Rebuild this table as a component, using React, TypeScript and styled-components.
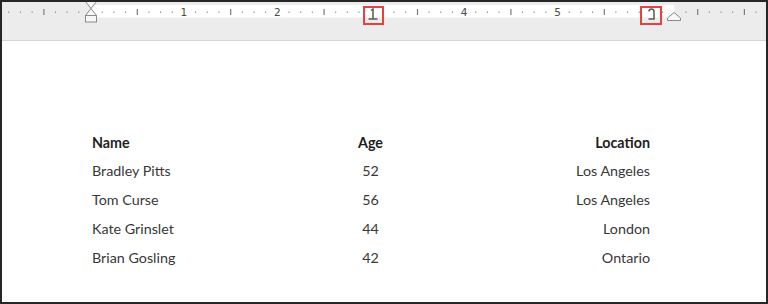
import styled, { createGlobalStyle } from 'styled-components';

const GlobalStyle = createGlobalStyle`
  html, body {
    margin: 0;
    padding: 0;
    background: #fff;
  }
  body {
    font-family: Lato, "Liberation Sans", sans-serif;
  }
`;

// ruler geometry, page coordinates
const ZERO = 90.5;
const INCH = 93.4;
const EIGHTH = INCH / 8;
const MARGIN_RIGHT = ZERO + INCH * 6.25;

const Frame = styled.div`
  width: 768px;
  height: 304px;
  box-sizing: border-box;
  border: 2px solid #262626;
  display: flex;
  flex-direction: column;
  overflow: hidden;
`;

const RulerBar = styled.div`
  position: relative;
  flex: 0 0 auto;
  height: 38px;
  background: #ececec;
  border-bottom: 1px solid #d6d6d6;
`;

const Scale = styled.svg`
  display: block;
`;

const Marker = styled.svg<{ $left: number; $top: number }>`
  position: absolute;
  left: ${({ $left }) => $left}px;
  top: ${({ $top }) => $top}px;
  overflow: visible;
`;

const Highlight = styled.div<{ $left: number; $top: number; $w: number; $h: number }>`
  position: absolute;
  left: ${({ $left }) => $left}px;
  top: ${({ $top }) => $top}px;
  width: ${({ $w }) => $w}px;
  height: ${({ $h }) => $h}px;
  box-sizing: border-box;
  border: 2px solid #e8403d;
`;

const Page = styled.div`
  flex: 1;
  background: #fff;
  padding: 87.5px 0 0 90px;
`;

const Table = styled.div`
  width: 558px;
  display: grid;
  grid-template-columns: 238px 81px 1fr;
  font-size: 14.3px;
  line-height: 28.75px;
  color: #333;
`;

const Cell = styled.div<{ $align?: 'left' | 'center' | 'right'; $head?: boolean }>`
  text-align: ${({ $align }) => $align ?? 'left'};
  font-weight: ${({ $head }) => ($head ? 700 : 400)};
  color: ${({ $head }) => ($head ? '#1e1e1e' : '#383838')};
  white-space: nowrap;
`;

type Row = { name: string; age: number; location: string };

const rows: Row[] = [
  { name: 'Bradley Pitts', age: 52, location: 'Los Angeles' },
  { name: 'Tom Curse', age: 56, location: 'Los Angeles' },
  { name: 'Kate Grinslet', age: 44, location: 'London' },
  { name: 'Brian Gosling', age: 42, location: 'Ontario' },
];

function RulerScale() {
  const marks = [];
  for (let k = -7; k <= 57; k += 1) {
    const x = ZERO + k * EIGHTH;
    if (k === 0 || k === 24 || k === 48 || k === 50) continue;
    if (k % 8 === 0 && k !== 56) {
      marks.push(
        <text
          key={k}
          x={x}
          y={15.8}
          textAnchor="middle"
          fontSize={10.5}
          fill="#4a4a4a"
          fontFamily='"DejaVu Sans", sans-serif'
        >
          {k / 8}
        </text>,
      );
    } else if (Math.abs(k) % 8 === 4 || k === 56) {
      marks.push(<rect key={k} x={x - 0.5} y={9} width={1.2} height={6} fill="#7d7d7d" />);
    } else {
      marks.push(<rect key={k} x={x - 0.5} y={11.5} width={1} height={1.5} fill="#8f8f8f" />);
    }
  }

  return (
    <Scale width={764} height={38} viewBox="2 2 764 38">
      <rect x={ZERO + 1.5} y={5} width={MARGIN_RIGHT - ZERO - 1.5} height={12.5} fill="#fff" />
      {marks}
    </Scale>
  );
}

function Ruler() {
  return (
    <RulerBar>
      <RulerScale />

      {/* first line / hanging / left indent */}
      <Marker $left={ZERO - 8} $top={-1} width={12} height={22}>
        <path d="M0.5,0.5 H11.5 L6,7.5 Z" fill="#f7f7f7" stroke="#8a8a8a" />
        <path d="M6,7.5 L0.5,14.5 H11.5 Z" fill="#f7f7f7" stroke="#8a8a8a" />
        <rect x={0.5} y={14.5} width={11} height={6.5} fill="#f7f7f7" stroke="#8a8a8a" />
      </Marker>

      {/* right indent */}
      <Marker $left={MARGIN_RIGHT - 9} $top={10} width={14} height={9}>
        <path d="M0.5,8.5 V6 L7,0.5 L13.5,6 V8.5 Z" fill="#f7f7f7" stroke="#8a8a8a" />
      </Marker>

      {/* center tab at 3" */}
      <Marker $left={ZERO + INCH * 3 - 7} $top={5} width={14} height={14}>
        <path d="M5,3.5 L7,2 V11.5 M2.5,12 H11.5" fill="none" stroke="#5a5a5a" strokeWidth={1.5} />
      </Marker>

      {/* right tab at 6" */}
      <Marker $left={ZERO + INCH * 6 - 9} $top={5} width={14} height={14}>
        <path
          d="M5,4.5 Q5,2 7.5,2 Q10,2 10,4.5 V12 H4.5"
          fill="none"
          stroke="#5a5a5a"
          strokeWidth={1.5}
        />
      </Marker>

      <Highlight $left={361} $top={4} $w={21} $h={19} />
      <Highlight $left={638} $top={4} $w={22} $h={19} />
    </RulerBar>
  );
}

export default function App() {
  return (
    <>
      <GlobalStyle />
      <Frame>
        <Ruler />
        <Page>
          <Table>
            <Cell $head>Name</Cell>
            <Cell $head $align="center">Age</Cell>
            <Cell $head $align="right">Location</Cell>
            {rows.map((row) => (
              <>
                <Cell key={`${row.name}-n`}>{row.name}</Cell>
                <Cell key={`${row.name}-a`} $align="center">{row.age}</Cell>
                <Cell key={`${row.name}-l`} $align="right">{row.location}</Cell>
              </>
            ))}
          </Table>
        </Page>
      </Frame>
    </>
  );
}
